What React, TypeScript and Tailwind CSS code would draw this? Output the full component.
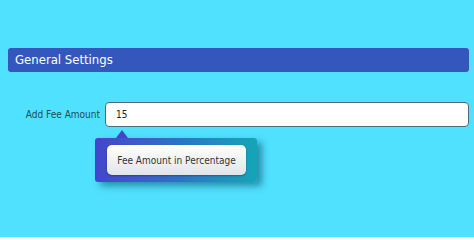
import React from "react";

export default function App() {
  return (
    <div
      className="w-[474px] h-[237px] bg-[#50e1fe] pt-[48px] pl-[8px] pr-[5px] overflow-hidden"
      style={{ fontFamily: '"DejaVu Sans Condensed", "DejaVu Sans", Verdana, sans-serif' }}
    >
      <div className="h-[24px] rounded-[3px] bg-[#3457be] text-white text-[13px] flex items-center pl-[7px]">
        General Settings
      </div>
      <div className="mt-[30px] flex items-center">
        <div className="w-[92px] text-right text-[10px] text-[#1d4c5c]">Add Fee Amount</div>
        <div className="ml-[5px] flex-1 h-[25px] bg-white border border-[#4b6b7b] rounded-[4px] flex items-center pl-[10px] text-[10px] text-[#222]">
          15
        </div>
      </div>
      <div className="relative ml-[87px] mt-[11px] w-[162px] h-[44px] rounded-[3px] bg-gradient-to-r from-[#4444cc] via-[#2f6fc6] to-[#12a6b6] shadow-[5px_4px_7px_rgba(0,60,90,0.5)] flex items-center pl-[12px]">
        <div className="absolute left-[21px] -top-[8px] w-0 h-0 border-l-[6px] border-r-[6px] border-b-[8px] border-l-transparent border-r-transparent border-b-[#4048ca]" />
        <div className="w-[139px] h-[30px] rounded-[5px] bg-gradient-to-b from-white to-[#e2e4e8] shadow-[0_1px_2px_rgba(0,0,0,0.3)] flex items-center justify-center text-[10px] text-[#333]">
          Fee Amount in Percentage
        </div>
      </div>
    </div>
  );
}
